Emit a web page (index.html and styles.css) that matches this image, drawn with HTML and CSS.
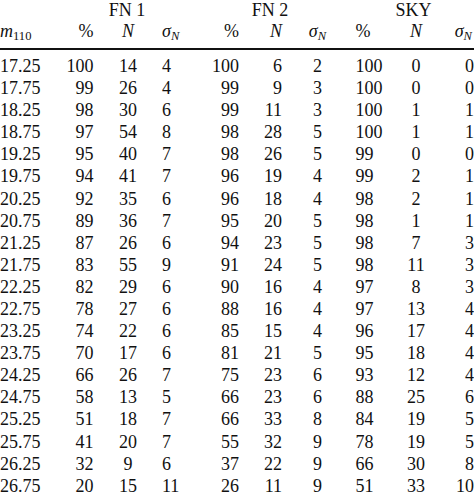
FILE: index.html
```html
<!DOCTYPE html>
<html>
<head>
<meta charset="utf-8">
<link rel="stylesheet" href="styles.css">
</head>
<body>
<div class="table">
  <div class="row groups">
    <div class="g g1">FN 1</div>
    <div class="g g2">FN 2</div>
    <div class="g g3">SKY</div>
  </div>
  <div class="row heads">
    <div class="c0"><i>m</i><sub>110</sub></div>
    <div class="c1">%</div>
    <div class="c2"><i>N</i></div>
    <div class="c3"><i>σ</i><sub><i>N</i></sub></div>
    <div class="c4">%</div>
    <div class="c5"><i>N</i></div>
    <div class="c6"><i>σ</i><sub><i>N</i></sub></div>
    <div class="c7">%</div>
    <div class="c8"><i>N</i></div>
    <div class="c9 h9"><i>σ</i><sub><i>N</i></sub></div>
  </div>
  <div class="rule"></div>
  <div class="row"><div class="c0">17.25</div><div class="c1">100</div><div class="c2">14</div><div class="c3">4</div><div class="c4">100</div><div class="c5">6</div><div class="c6">2</div><div class="c7">100</div><div class="c8">0</div><div class="c9">0</div></div>
  <div class="row"><div class="c0">17.75</div><div class="c1">99</div><div class="c2">26</div><div class="c3">4</div><div class="c4">99</div><div class="c5">9</div><div class="c6">3</div><div class="c7">100</div><div class="c8">0</div><div class="c9">0</div></div>
  <div class="row"><div class="c0">18.25</div><div class="c1">98</div><div class="c2">30</div><div class="c3">6</div><div class="c4">99</div><div class="c5">11</div><div class="c6">3</div><div class="c7">100</div><div class="c8">1</div><div class="c9">1</div></div>
  <div class="row"><div class="c0">18.75</div><div class="c1">97</div><div class="c2">54</div><div class="c3">8</div><div class="c4">98</div><div class="c5">28</div><div class="c6">5</div><div class="c7">100</div><div class="c8">1</div><div class="c9">1</div></div>
  <div class="row"><div class="c0">19.25</div><div class="c1">95</div><div class="c2">40</div><div class="c3">7</div><div class="c4">98</div><div class="c5">26</div><div class="c6">5</div><div class="c7">99</div><div class="c8">0</div><div class="c9">0</div></div>
  <div class="row"><div class="c0">19.75</div><div class="c1">94</div><div class="c2">41</div><div class="c3">7</div><div class="c4">96</div><div class="c5">19</div><div class="c6">4</div><div class="c7">99</div><div class="c8">2</div><div class="c9">1</div></div>
  <div class="row"><div class="c0">20.25</div><div class="c1">92</div><div class="c2">35</div><div class="c3">6</div><div class="c4">96</div><div class="c5">18</div><div class="c6">4</div><div class="c7">98</div><div class="c8">2</div><div class="c9">1</div></div>
  <div class="row"><div class="c0">20.75</div><div class="c1">89</div><div class="c2">36</div><div class="c3">7</div><div class="c4">95</div><div class="c5">20</div><div class="c6">5</div><div class="c7">98</div><div class="c8">1</div><div class="c9">1</div></div>
  <div class="row"><div class="c0">21.25</div><div class="c1">87</div><div class="c2">26</div><div class="c3">6</div><div class="c4">94</div><div class="c5">23</div><div class="c6">5</div><div class="c7">98</div><div class="c8">7</div><div class="c9">3</div></div>
  <div class="row"><div class="c0">21.75</div><div class="c1">83</div><div class="c2">55</div><div class="c3">9</div><div class="c4">91</div><div class="c5">24</div><div class="c6">5</div><div class="c7">98</div><div class="c8">11</div><div class="c9">3</div></div>
  <div class="row"><div class="c0">22.25</div><div class="c1">82</div><div class="c2">29</div><div class="c3">6</div><div class="c4">90</div><div class="c5">16</div><div class="c6">4</div><div class="c7">97</div><div class="c8">8</div><div class="c9">3</div></div>
  <div class="row"><div class="c0">22.75</div><div class="c1">78</div><div class="c2">27</div><div class="c3">6</div><div class="c4">88</div><div class="c5">16</div><div class="c6">4</div><div class="c7">97</div><div class="c8">13</div><div class="c9">4</div></div>
  <div class="row"><div class="c0">23.25</div><div class="c1">74</div><div class="c2">22</div><div class="c3">6</div><div class="c4">85</div><div class="c5">15</div><div class="c6">4</div><div class="c7">96</div><div class="c8">17</div><div class="c9">4</div></div>
  <div class="row"><div class="c0">23.75</div><div class="c1">70</div><div class="c2">17</div><div class="c3">6</div><div class="c4">81</div><div class="c5">21</div><div class="c6">5</div><div class="c7">95</div><div class="c8">18</div><div class="c9">4</div></div>
  <div class="row"><div class="c0">24.25</div><div class="c1">66</div><div class="c2">26</div><div class="c3">7</div><div class="c4">75</div><div class="c5">23</div><div class="c6">6</div><div class="c7">93</div><div class="c8">12</div><div class="c9">4</div></div>
  <div class="row"><div class="c0">24.75</div><div class="c1">58</div><div class="c2">13</div><div class="c3">5</div><div class="c4">66</div><div class="c5">23</div><div class="c6">6</div><div class="c7">88</div><div class="c8">25</div><div class="c9">6</div></div>
  <div class="row"><div class="c0">25.25</div><div class="c1">51</div><div class="c2">18</div><div class="c3">7</div><div class="c4">66</div><div class="c5">33</div><div class="c6">8</div><div class="c7">84</div><div class="c8">19</div><div class="c9">5</div></div>
  <div class="row"><div class="c0">25.75</div><div class="c1">41</div><div class="c2">20</div><div class="c3">7</div><div class="c4">55</div><div class="c5">32</div><div class="c6">9</div><div class="c7">78</div><div class="c8">19</div><div class="c9">5</div></div>
  <div class="row"><div class="c0">26.25</div><div class="c1">32</div><div class="c2">9</div><div class="c3">6</div><div class="c4">37</div><div class="c5">22</div><div class="c6">9</div><div class="c7">66</div><div class="c8">30</div><div class="c9">8</div></div>
  <div class="row"><div class="c0">26.75</div><div class="c1">20</div><div class="c2">15</div><div class="c3">11</div><div class="c4">26</div><div class="c5">11</div><div class="c6">9</div><div class="c7">51</div><div class="c8">33</div><div class="c9">10</div></div>
</div>
</body>
</html>
```
FILE: styles.css
```css
html, body {
  margin: 0;
  padding: 0;
  background: #ffffff;
  overflow: hidden;
}
body {
  font-family: "Liberation Serif", "Times New Roman", serif;
  font-size: 18px;
  color: #111111;
}
.table {
  width: 474px;
}
.row {
  display: grid;
  grid-template-columns: 55.5px 39px 67px 37px 40.5px 43px 71px 42px 42px 37px;
  line-height: 22.1px;
  height: 22.1px;
  white-space: nowrap;
}
.groups {
  line-height: 20px;
  height: 20px;
}
.c0 { text-align: left; padding-left: 0; }
.c1 { text-align: right; padding-right: 1px; }
.c2 { text-align: center; }
.c3 { text-align: left; padding-left: 0.5px; }
.c4 { text-align: right; }
.c5 { text-align: right; }
.c6 { text-align: center; }
.c7 { text-align: left; padding-left: 2.5px; }
.c8 { text-align: center; }
.c9 { text-align: right; }
.h9 { padding-right: 2px; }
.g { text-align: center; }
.g1 { grid-column: 2 / 5; }
.g2 { grid-column: 5 / 8; padding-right: 11.5px; }
.g3 { grid-column: 8 / 11; }
i { font-style: italic; }
sub {
  font-size: 12.6px;
  line-height: 0;
  vertical-align: -3px;
}
.rule {
  height: 2px;
  background: #111111;
  margin-top: 6px;
  margin-bottom: 4.9px;
}
```
